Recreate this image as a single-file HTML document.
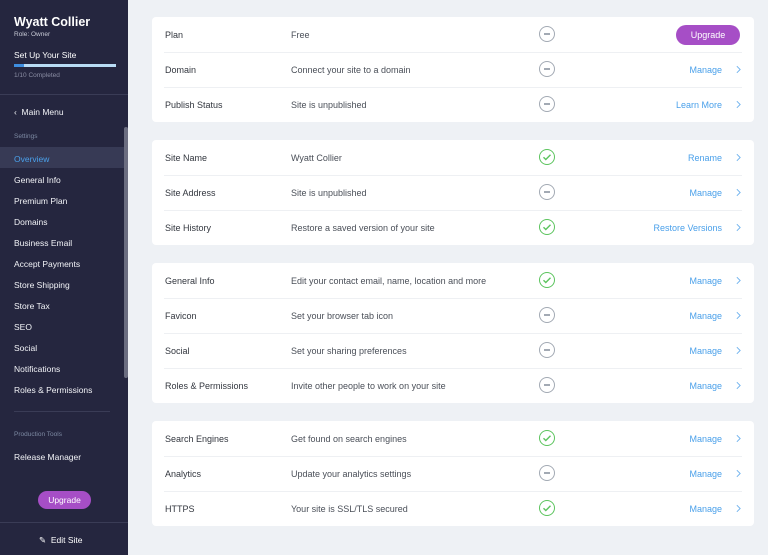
<!DOCTYPE html>
<html><head><style>
*{margin:0;padding:0;box-sizing:border-box}
body{width:768px;height:555px;overflow:hidden;background:#eef1f5;font-family:"Liberation Sans",sans-serif;position:relative}
.sb{position:absolute;left:0;top:0;width:128px;height:555px;background:#25263f;color:#fff}
.sb div{position:absolute;white-space:nowrap}
.nav{left:14px;font-size:8.5px;color:#f2f3f7}
.card{position:absolute;left:152px;width:602px;background:#fff;border-radius:4px}
.row{position:relative;height:35px;font-size:9px;color:#32363e}
.row+.row:before{content:"";position:absolute;left:12px;right:12px;top:0;border-top:1px solid #eef0f3}
.row span{position:absolute;top:13px}
.l{left:13px}.d{left:139px;color:#4a4f58}
.ic{position:absolute;left:387px;top:9px;width:16px;height:16px;border-radius:50%;border:1.5px solid #a3aab4}
.ic.m:after{content:"";position:absolute;left:3.5px;top:6px;width:6px;height:1.5px;background:#a3aab4}
.ic.ok{border-color:#5cc45e}
.ic.ok svg{position:absolute;left:2px;top:2px}
.a{right:32px;color:#4aa0ea}
.ch{position:absolute;right:13px;top:13px}
.up{position:absolute;right:14px;top:8px;width:64px;height:20px;border-radius:10px;background:#a64ec6;color:#fff;font-size:9px;text-align:center;line-height:20px}
</style></head><body>
<div class="sb">
<div style="left:14px;top:15px;font-size:12.5px;font-weight:bold">Wyatt Collier</div>
<div style="left:14px;top:31px;font-size:6.5px;color:#c8cad6">Role: Owner</div>
<div style="left:14px;top:50px;font-size:8.5px">Set Up Your Site</div>
<div style="left:14px;top:64px;width:102px;height:3px;background:#b9dcf5"></div>
<div style="left:14px;top:64px;width:10px;height:3px;background:#3e8ee0"></div>
<div style="left:14px;top:72px;font-size:6.5px;color:#8a8da3">1/10 Completed</div>
<div style="left:0;top:94px;width:128px;height:1px;background:#3a3c56"></div>
<div class="nav" style="top:107px;font-size:8.5px">‹&nbsp; Main Menu</div>
<div style="left:14px;top:133px;font-size:6.5px;color:#7d8aa3">Settings</div>
<div style="left:0;top:147px;width:124px;height:21px;background:#373a55"></div>
<div class="nav" style="top:154px;color:#4aa0ea">Overview</div>
<div class="nav" style="top:175px">General Info</div>
<div class="nav" style="top:196px">Premium Plan</div>
<div class="nav" style="top:217px">Domains</div>
<div class="nav" style="top:238px">Business Email</div>
<div class="nav" style="top:259px">Accept Payments</div>
<div class="nav" style="top:280px">Store Shipping</div>
<div class="nav" style="top:301px">Store Tax</div>
<div class="nav" style="top:322px">SEO</div>
<div class="nav" style="top:343px">Social</div>
<div class="nav" style="top:364px">Notifications</div>
<div class="nav" style="top:385px">Roles &amp; Permissions</div>
<div style="left:124px;top:127px;width:4px;height:251px;background:#6b6d80;border-radius:2px"></div>
<div style="left:14px;top:411px;width:96px;height:1px;background:#3a3c56"></div>
<div style="left:14px;top:431px;font-size:6.5px;color:#7d8aa3">Production Tools</div>
<div class="nav" style="top:452px">Release Manager</div>
<div style="left:38px;top:491px;width:53px;height:18px;border-radius:9px;background:#a64ec6;font-size:8.5px;text-align:center;line-height:18px">Upgrade</div>
<div style="left:0;top:522px;width:128px;height:1px;background:#3a3c56"></div>
<div style="left:39px;top:535px;font-size:8.5px">✎&nbsp; Edit Site</div>
</div>
<svg width="0" height="0" style="position:absolute"><defs>
<symbol id="c" viewBox="0 0 6 10"><path d="M1 1l4 4-4 4" stroke="#6fb2ee" stroke-width="1.1" fill="none"/></symbol>
<symbol id="k" viewBox="0 0 10 10"><path d="M1.5 5.2l2.3 2.3 4.7-4.7" stroke="#5cc45e" stroke-width="1.4" fill="none"/></symbol>
</defs></svg>

<div class="card" style="top:17px">
<div class="row"><span class="l">Plan</span><span class="d">Free</span><i class="ic m"></i><div class="up">Upgrade</div></div>
<div class="row"><span class="l">Domain</span><span class="d">Connect your site to a domain</span><i class="ic m"></i><span class="a">Manage</span><svg class="ch" width="5" height="9"><use href="#c"/></svg></div>
<div class="row"><span class="l">Publish Status</span><span class="d">Site is unpublished</span><i class="ic m"></i><span class="a">Learn More</span><svg class="ch" width="5" height="9"><use href="#c"/></svg></div>
</div>
<div class="card" style="top:140px">
<div class="row"><span class="l">Site Name</span><span class="d">Wyatt Collier</span><i class="ic ok"><svg width="10" height="10"><use href="#k"/></svg></i><span class="a">Rename</span><svg class="ch" width="5" height="9"><use href="#c"/></svg></div>
<div class="row"><span class="l">Site Address</span><span class="d">Site is unpublished</span><i class="ic m"></i><span class="a">Manage</span><svg class="ch" width="5" height="9"><use href="#c"/></svg></div>
<div class="row"><span class="l">Site History</span><span class="d">Restore a saved version of your site</span><i class="ic ok"><svg width="10" height="10"><use href="#k"/></svg></i><span class="a">Restore Versions</span><svg class="ch" width="5" height="9"><use href="#c"/></svg></div>
</div>
<div class="card" style="top:263px">
<div class="row"><span class="l">General Info</span><span class="d">Edit your contact email, name, location and more</span><i class="ic ok"><svg width="10" height="10"><use href="#k"/></svg></i><span class="a">Manage</span><svg class="ch" width="5" height="9"><use href="#c"/></svg></div>
<div class="row"><span class="l">Favicon</span><span class="d">Set your browser tab icon</span><i class="ic m"></i><span class="a">Manage</span><svg class="ch" width="5" height="9"><use href="#c"/></svg></div>
<div class="row"><span class="l">Social</span><span class="d">Set your sharing preferences</span><i class="ic m"></i><span class="a">Manage</span><svg class="ch" width="5" height="9"><use href="#c"/></svg></div>
<div class="row"><span class="l">Roles &amp; Permissions</span><span class="d">Invite other people to work on your site</span><i class="ic m"></i><span class="a">Manage</span><svg class="ch" width="5" height="9"><use href="#c"/></svg></div>
</div>
<div class="card" style="top:421px">
<div class="row"><span class="l">Search Engines</span><span class="d">Get found on search engines</span><i class="ic ok"><svg width="10" height="10"><use href="#k"/></svg></i><span class="a">Manage</span><svg class="ch" width="5" height="9"><use href="#c"/></svg></div>
<div class="row"><span class="l">Analytics</span><span class="d">Update your analytics settings</span><i class="ic m"></i><span class="a">Manage</span><svg class="ch" width="5" height="9"><use href="#c"/></svg></div>
<div class="row"><span class="l">HTTPS</span><span class="d">Your site is SSL/TLS secured</span><i class="ic ok"><svg width="10" height="10"><use href="#k"/></svg></i><span class="a">Manage</span><svg class="ch" width="5" height="9"><use href="#c"/></svg></div>
</div>
</body></html>
